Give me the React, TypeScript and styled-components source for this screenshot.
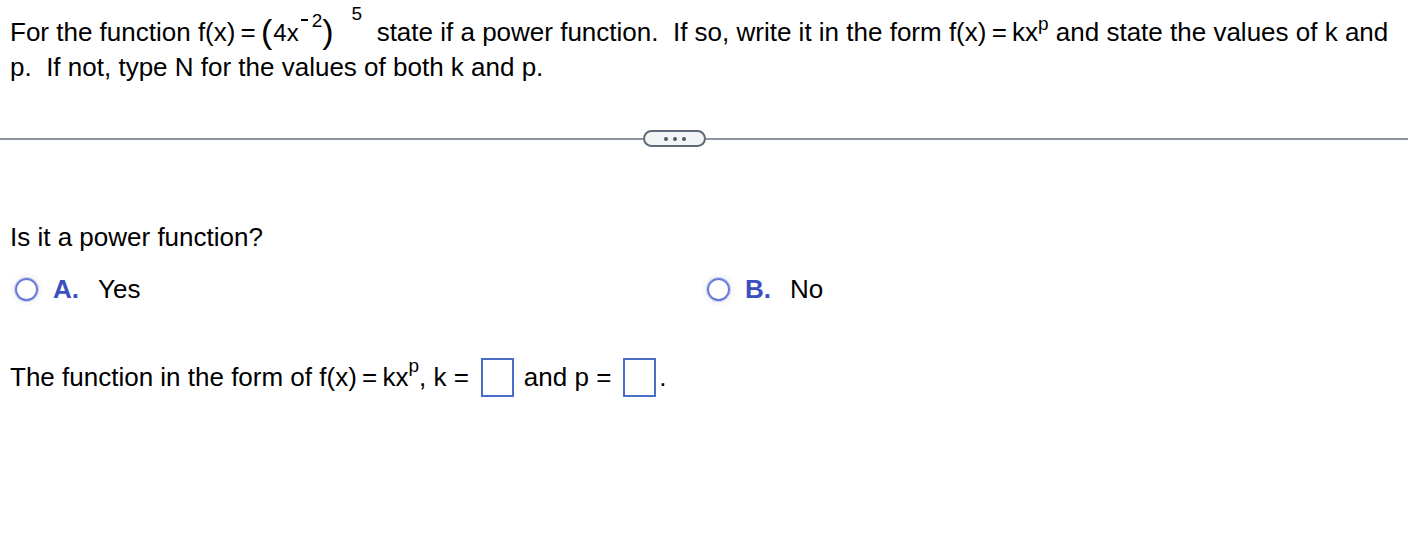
import styled, { createGlobalStyle } from "styled-components";

const GlobalStyle = createGlobalStyle`
  html, body {
    margin: 0;
    padding: 0;
    background: #ffffff;
  }
  body {
    font-family: "Liberation Sans", Arial, Helvetica, sans-serif;
    color: #000;
  }
`;

const Page = styled.div`
  width: 1412px;
  height: 536px;
  overflow: hidden;
  background: #fff;
`;

const Prompt = styled.p`
  margin: 0;
  padding: 15px 4px 0 10px;
  font-size: 26px;
  line-height: 35px;
`;

const Paren = styled.span`
  font-size: 34px;
  line-height: 0;
  position: relative;
  top: 2px;
  margin: 0 1px 0 0;
`;

const MathText = styled.span`
  font-size: 24px;
`;

const Sup = styled.span<{ $raise: number; $size?: number; $gap?: number }>`
  position: relative;
  top: -${(p) => p.$raise}px;
  font-size: ${(p) => p.$size ?? 19}px;
  line-height: 0;
  margin-left: ${(p) => p.$gap ?? 0}px;
`;

const Minus = styled.span`
  display: inline-block;
  width: 7px;
  height: 2px;
  background: #000;
  vertical-align: 6px;
  margin: 0 4px 0 2px;
`;

const DividerRow = styled.div`
  display: flex;
  align-items: center;
  width: 1408px;
  margin-top: 45px;
`;

const Line = styled.div<{ $grow?: boolean }>`
  height: 2px;
  background: #8d939f;
  flex: ${(p) => (p.$grow ? "1" : "0 0 643px")};
`;

const MoreButton = styled.div`
  width: 59px;
  height: 13px;
  border: 2px solid #5d6a79;
  border-radius: 9px;
  background: #f3f4f6;
  display: flex;
  align-items: center;
  justify-content: center;
  gap: 5px;
`;

const Dot = styled.span`
  width: 4px;
  height: 4px;
  border-radius: 50%;
  background: #4d5866;
`;

const Question = styled.div`
  padding: 75px 0 0 10px;
  font-size: 26px;
  line-height: 30px;
`;

const Options = styled.div`
  display: grid;
  grid-template-columns: 692px 1fr;
  margin-top: 22px;
  padding-left: 10px;
`;

const Option = styled.label`
  display: flex;
  align-items: center;
  font-size: 26px;
  line-height: 30px;
`;

const Radio = styled.span`
  width: 19px;
  height: 19px;
  border-radius: 50%;
  border: 2.5px solid #6b7bd8;
  box-shadow: 0 0 1px 1px rgba(107, 123, 216, 0.35), 0 0 0 5px rgba(120, 120, 140, 0.04);
  margin-left: 5px;
  margin-right: 15px;
  flex: none;
`;

const Letter = styled.span`
  font-weight: 700;
  color: #3c4fc0;
  width: 45px;
`;

const Answer = styled.div`
  padding: 53px 0 0 10px;
  font-size: 26px;
  line-height: 40px;
  display: flex;
  align-items: center;
  white-space: pre;
`;

const InputBox = styled.span<{ $tail?: number }>`
  display: inline-block;
  width: 29px;
  height: 35px;
  border: 2px solid #4a6cc6;
  margin: 0 ${(p) => p.$tail ?? 10}px 0 12px;
`;

export default function App() {
  return (
    <Page>
      <GlobalStyle />
      <Prompt>
        For the function f(x)&thinsp;=&thinsp;
        <Paren>(</Paren>
        <MathText>4x</MathText>
        <Sup $raise={14}>
          <Minus />2
        </Sup>
        <Paren>)</Paren>
        <Sup $raise={21} $gap={17}>
          5
        </Sup>
        {"\u00a0\u00a0"}state if a power function.{"\u00a0\u00a0"}If so, write it in the form
        f(x)&thinsp;=&thinsp;kx
        <Sup $raise={11}>p</Sup> and state the values of k and p.{"\u00a0\u00a0"}If not, type N for the
        values of both k and p.
      </Prompt>

      <DividerRow>
        <Line />
        <MoreButton>
          <Dot />
          <Dot />
          <Dot />
        </MoreButton>
        <Line $grow />
      </DividerRow>

      <Question>Is it a power function?</Question>

      <Options>
        <Option>
          <Radio />
          <Letter>A.</Letter>
          Yes
        </Option>
        <Option>
          <Radio />
          <Letter>B.</Letter>
          No
        </Option>
      </Options>

      <Answer>
        The function in the form of f(x){"\u2009=\u2009"}kx
        <Sup $raise={11}>p</Sup>, k =<InputBox />and p =<InputBox $tail={3} />.
      </Answer>
    </Page>
  );
}
